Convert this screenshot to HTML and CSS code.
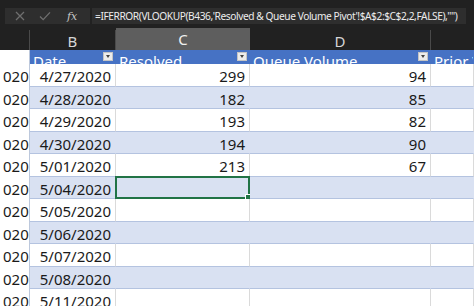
FILE: index.html
```html
<!DOCTYPE html>
<html lang="en">
<head>
  <meta charset="UTF-8" />
  <title>Resolved &amp; Queue Volume</title>
  <link rel="stylesheet" href="styles.css">
</head>
<body>
  <div class="sheet">
    <div class="formula-bar">
      <div class="fbtns">
        <svg class="ico" width="10" height="10" viewBox="0 0 10 10"><path d="M1 1L9 9M9 1L1 9" stroke="#6f6f6f" stroke-width="1.3" fill="none"/></svg>
        <svg class="ico" width="12" height="10" viewBox="0 0 12 10"><path d="M1 5.5L4.2 8.6L11 1.4" stroke="#6f6f6f" stroke-width="1.3" fill="none"/></svg>
        <span class="fx">fx</span>
      </div>
      <div class="formula">=IFERROR(VLOOKUP(B436,'Resolved &amp; Queue Volume Pivot'!$A$2:$C$2,2,FALSE),"")</div>
    </div>

    <div class="col-heads">
      <div class="ch"></div>
      <div class="ch">B</div>
      <div class="ch sel">C</div>
      <div class="ch">D</div>
      <div class="ch last"></div>
    </div>

    <div class="row head">
      <div class="cell a"></div>
      <div class="cell">Date<span class="drop"></span></div>
      <div class="cell">Resolved<span class="drop"></span></div>
      <div class="cell">Queue Volume<span class="drop"></span></div>
      <div class="cell">Prior Volume</div>
    </div>

    <div class="row"><div class="cell a">020</div><div class="cell num">4/27/2020</div><div class="cell num">299</div><div class="cell num">94</div><div class="cell"></div></div>
    <div class="row band"><div class="cell a">020</div><div class="cell num">4/28/2020</div><div class="cell num">182</div><div class="cell num">85</div><div class="cell"></div></div>
    <div class="row"><div class="cell a">020</div><div class="cell num">4/29/2020</div><div class="cell num">193</div><div class="cell num">82</div><div class="cell"></div></div>
    <div class="row band"><div class="cell a">020</div><div class="cell num">4/30/2020</div><div class="cell num">194</div><div class="cell num">90</div><div class="cell"></div></div>
    <div class="row"><div class="cell a">020</div><div class="cell num">5/01/2020</div><div class="cell num">213</div><div class="cell num">67</div><div class="cell"></div></div>
    <div class="row band"><div class="cell a">020</div><div class="cell num">5/04/2020</div><div class="cell active"></div><div class="cell"></div><div class="cell"></div></div>
    <div class="row"><div class="cell a">020</div><div class="cell num">5/05/2020</div><div class="cell"></div><div class="cell"></div><div class="cell"></div></div>
    <div class="row band"><div class="cell a">020</div><div class="cell num">5/06/2020</div><div class="cell"></div><div class="cell"></div><div class="cell"></div></div>
    <div class="row"><div class="cell a">020</div><div class="cell num">5/07/2020</div><div class="cell"></div><div class="cell"></div><div class="cell"></div></div>
    <div class="row band"><div class="cell a">020</div><div class="cell num">5/08/2020</div><div class="cell"></div><div class="cell"></div><div class="cell"></div></div>
    <div class="row"><div class="cell a">020</div><div class="cell num">5/11/2020</div><div class="cell"></div><div class="cell"></div><div class="cell"></div></div>
  </div>
</body>
</html>
```

FILE: styles.css
```css
* {
  margin: 0;
  padding: 0;
  box-sizing: border-box;
}

body {
  background-color: #ffffff;
  font-family: 'Noto Sans', 'Open Sans', sans-serif;
  overflow: hidden;
}

.sheet {
  width: 474px;
  height: 306px;
  overflow: hidden;
}

/* formula bar */
.formula-bar {
  display: flex;
  gap: 2px;
  height: 28px;
  padding: 8px 8px 0 5px;
  background-color: #212121;
}

.fbtns {
  display: flex;
  align-items: center;
  width: 85px;
  height: 16px;
  padding-left: 10px;
  gap: 14px;
  background-color: #2e2e2e;
}

.fx {
  font-family: 'DejaVu Serif', serif;
  font-style: italic;
  font-size: 11px;
  color: #c8c8c8;
  margin-left: 2px;
}

.formula {
  flex: 1;
  height: 16px;
  padding-left: 3px;
  background-color: #2e2e2e;
  color: #ececec;
  font-size: 10.2px;
  letter-spacing: -0.43px;
  line-height: 16px;
  white-space: nowrap;
  overflow: hidden;
}

/* column letters */
.col-heads {
  display: grid;
  grid-template-columns: 30px 86px 134px 181px 1fr;
  height: 22px;
  background-color: #212121;
}

.ch {
  margin-top: 2px;
  border-right: 1px solid #4a4a4a;
  color: #d6d6d6;
  font-size: 15px;
  line-height: 22px;
  text-align: center;
}

.ch.sel {
  margin-top: 0;
  background-color: #5e5e5e;
  color: #f0f0f0;
  border-right: none;
}

.ch.last {
  border-right: none;
}

/* rows */
.row {
  display: grid;
  grid-template-columns: 30px 86px 134px 181px 1fr;
  height: 22.5px;
}

.cell {
  position: relative;
  height: 22.5px;
  padding: 0 4px 0 3px;
  border-right: 1px solid #dadada;
  border-bottom: 1px solid #b4c3e0;
  background-color: #ffffff;
  color: #1a1a1a;
  font-size: 15px;
  line-height: 24px;
  white-space: nowrap;
  overflow: hidden;
}

.cell.a {
  padding-right: 3px;
  border-right: 1px solid #bcc8dc;
  border-bottom: none;
  text-align: right;
}

.num {
  text-align: right;
}

.band .cell {
  background-color: #d9e1f2;
  border-right-color: #d9e1f2;
}

.band .cell.a {
  background-color: #ffffff;
  border-right-color: #bcc8dc;
}

.head {
  height: 14px;
}

.head .cell {
  height: 14px;
  background-color: #4672c4;
  border-right: 1px solid #4672c4;
  border-bottom: none;
  color: #ffffff;
  line-height: 23px;
}

.head .cell.a {
  background-color: #ffffff;
  border-right: 1px solid #bcc8dc;
}

.drop {
  position: absolute;
  right: 2px;
  top: 2px;
  width: 10px;
  height: 9px;
  background-color: #ececec;
  border: 1px solid #c4c4c4;
}

.drop::after {
  content: "";
  position: absolute;
  left: 2px;
  top: 2px;
  border-left: 2.5px solid transparent;
  border-right: 2.5px solid transparent;
  border-top: 3px solid #444444;
}

.active {
  overflow: visible;
}

.active::before {
  content: "";
  position: absolute;
  left: -1px;
  top: -1px;
  right: -1px;
  bottom: -1px;
  border: 2px solid #217346;
}

.active::after {
  content: "";
  position: absolute;
  right: -3px;
  bottom: -3px;
  width: 5px;
  height: 5px;
  background-color: #217346;
  border: 1px solid #ffffff;
}
```
